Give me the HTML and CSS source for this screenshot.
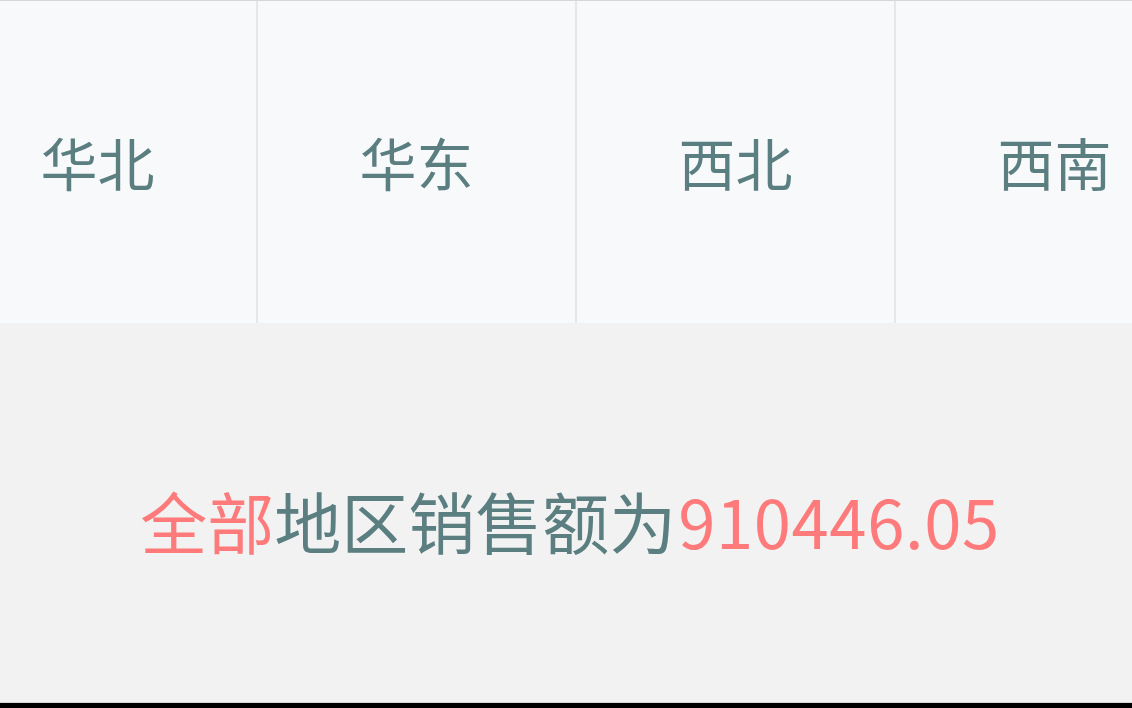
FILE: index.html
```html
<!DOCTYPE html>
<html lang="zh">
<head>
<meta charset="utf-8">
<link rel="stylesheet" href="styles.css">
</head>
<body>
<div class="page">
  <div class="tabs-viewport">
    <div class="tabs">
      <div class="tab">华北</div>
      <div class="tab">华东</div>
      <div class="tab">西北</div>
      <div class="tab">西南</div>
    </div>
  </div>
  <div class="summary">
    <p class="summary-text"><span class="hl">全部</span>地区销售额为<span class="hl num">910446.05</span></p>
  </div>
  <div class="bottom-bar"></div>
</div>
</body>
</html>
```

FILE: styles.css
```css
html, body {
  margin: 0;
  padding: 0;
  width: 1132px;
  height: 708px;
  overflow: hidden;
  font-family: "Noto Sans CJK SC", "Noto Sans", sans-serif;
}
.page {
  display: flex;
  flex-direction: column;
  height: 708px;
  background: #f2f2f2;
}
.tabs-viewport {
  overflow: hidden;
  border-top: 1px solid #d6d6d6;
  background: #f8f9fb;
  flex: 0 0 auto;
}
.tabs {
  display: flex;
  margin-left: -61px;
}
.tab {
  flex: 0 0 319px;
  height: 322px;
  display: flex;
  align-items: center;
  justify-content: center;
  border-right: 2px solid #e6e7e9;
  color: #5b7e80;
  font-size: 57px;
  box-sizing: border-box;
  padding-bottom: 2px;
}
.summary {
  flex: 1 1 auto;
  display: flex;
  align-items: center;
  justify-content: center;
  border-bottom: 1px solid #d8d8d8;
  padding-top: 14px;
  padding-left: 8px;
}
.summary-text {
  margin: 0;
  font-size: 67px;
  color: #5b7e80;
  line-height: 1;
}
.hl {
  color: #ff7b7b;
}
.num {
  letter-spacing: 0.6px;
  margin-left: 2px;
}
.bottom-bar {
  flex: 0 0 5px;
  background: #000;
}
```
